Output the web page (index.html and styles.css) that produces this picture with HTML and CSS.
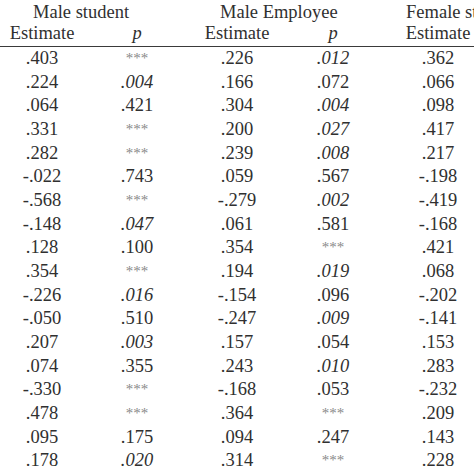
FILE: index.html
```html
<!DOCTYPE html>
<html>
<head>
<meta charset="utf-8">
<link rel="stylesheet" href="styles.css">
</head>
<body>
<div class="wrap">
<table class="t">
<colgroup>
<col class="c1"><col class="c2"><col class="c3"><col class="c4"><col class="c5">
</colgroup>
<thead>
<tr class="grp"><th colspan="2" class="g1">Male student</th><th colspan="2" class="g2">Male Employee</th><th class="g3">Female student</th></tr>
<tr class="sub"><th>Estimate</th><th><i>p</i></th><th>Estimate</th><th><i>p</i></th><th>Estimate</th></tr>
</thead>
<tbody>
<tr><td>.403</td><td class="s">***</td><td>.226</td><td><i>.012</i></td><td>.362</td></tr>
<tr><td>.224</td><td><i>.004</i></td><td>.166</td><td>.072</td><td>.066</td></tr>
<tr><td>.064</td><td>.421</td><td>.304</td><td><i>.004</i></td><td>.098</td></tr>
<tr><td>.331</td><td class="s">***</td><td>.200</td><td><i>.027</i></td><td>.417</td></tr>
<tr><td>.282</td><td class="s">***</td><td>.239</td><td><i>.008</i></td><td>.217</td></tr>
<tr><td>-.022</td><td>.743</td><td>.059</td><td>.567</td><td>-.198</td></tr>
<tr><td>-.568</td><td class="s">***</td><td>-.279</td><td><i>.002</i></td><td>-.419</td></tr>
<tr><td>-.148</td><td><i>.047</i></td><td>.061</td><td>.581</td><td>-.168</td></tr>
<tr><td>.128</td><td>.100</td><td>.354</td><td class="s">***</td><td>.421</td></tr>
<tr><td>.354</td><td class="s">***</td><td>.194</td><td><i>.019</i></td><td>.068</td></tr>
<tr><td>-.226</td><td><i>.016</i></td><td>-.154</td><td>.096</td><td>-.202</td></tr>
<tr><td>-.050</td><td>.510</td><td>-.247</td><td><i>.009</i></td><td>-.141</td></tr>
<tr><td>.207</td><td><i>.003</i></td><td>.157</td><td>.054</td><td>.153</td></tr>
<tr><td>.074</td><td>.355</td><td>.243</td><td><i>.010</i></td><td>.283</td></tr>
<tr><td>-.330</td><td class="s">***</td><td>-.168</td><td>.053</td><td>-.232</td></tr>
<tr><td>.478</td><td class="s">***</td><td>.364</td><td class="s">***</td><td>.209</td></tr>
<tr><td>.095</td><td>.175</td><td>.094</td><td>.247</td><td>.143</td></tr>
<tr><td>.178</td><td><i>.020</i></td><td>.314</td><td class="s">***</td><td>.228</td></tr>
</tbody>
</table>
</div>
</body>
</html>
```
FILE: styles.css
```css
html, body { margin: 0; padding: 0; background: #fff; }
.wrap { width: 474px; height: 474px; overflow: hidden; }
.t {
  border-collapse: collapse;
  table-layout: fixed;
  width: 494px;
  font-family: "Liberation Serif", "Times New Roman", serif;
  font-size: 18.5px;
  color: #303030;
}
.c1 { width: 84px; }
.c2 { width: 106px; }
.c3 { width: 94px; }
.c4 { width: 98px; }
.c5 { width: 112px; }
th, td { padding: 0; text-align: center; font-weight: normal; height: 23.65px; line-height: 23.65px; white-space: nowrap; }
.grp th { height: 24px; line-height: 24px; text-align: left; }
.g1 { padding-left: 33px; }
.g2 { padding-left: 30px; }
.g3 { padding-left: 24px; }
.sub th { height: 18px; line-height: 18px; padding-bottom: 4px; border-bottom: 1.5px solid #3a3a3a; }
.s { color: #8a8a8a; font-size: 15px; }
i { font-style: italic; }
```
